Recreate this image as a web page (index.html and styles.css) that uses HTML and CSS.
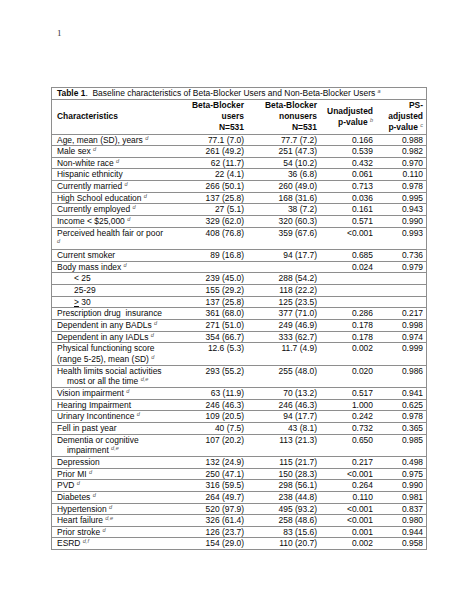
FILE: index.html
```html
<!DOCTYPE html>
<html>
<head>
<meta charset="utf-8">
<link rel="stylesheet" href="styles.css">
</head>
<body>
<div class="page">
  <div class="pagenum">1</div>
  <table class="tbl">
    <colgroup>
      <col class="c1"><col class="c2"><col class="c3"><col class="c4"><col class="c5">
    </colgroup>
    <thead>
      <tr class="title-row">
        <td colspan="5"><b>Table 1</b>.&nbsp; Baseline characteristics of Beta-Blocker Users and Non-Beta-Blocker Users <sup class="n">a</sup></td>
      </tr>
      <tr class="head-row">
        <th class="lbl">Characteristics</th>
        <th class="num">Beta-Blocker<br>users<br>N=531</th>
        <th class="num">Beta-Blocker<br>nonusers<br>N=531</th>
        <th class="num p1">Unadjusted<br>p-value <sup class="n">b</sup></th>
        <th class="num">PS-<br>adjusted<br>p-value <sup class="n">c</sup></th>
      </tr>
    </thead>
    <tbody>
      <tr><td>Age, mean (SD), years <sup class="n">d</sup></td><td class="num">77.1 (7.0)</td><td class="num">77.7 (7.2)</td><td class="num p1">0.166</td><td class="num">0.988</td></tr>
      <tr><td>Male sex <sup class="n">d</sup></td><td class="num">261 (49.2)</td><td class="num">251 (47.3)</td><td class="num p1">0.539</td><td class="num">0.982</td></tr>
      <tr><td>Non-white race <sup class="n">d</sup></td><td class="num">62 (11.7)</td><td class="num">54 (10.2)</td><td class="num p1">0.432</td><td class="num">0.970</td></tr>
      <tr><td>Hispanic ethnicity</td><td class="num">22 (4.1)</td><td class="num">36 (6.8)</td><td class="num p1">0.061</td><td class="num">0.110</td></tr>
      <tr><td>Currently married <sup class="n">d</sup></td><td class="num">266 (50.1)</td><td class="num">260 (49.0)</td><td class="num p1">0.713</td><td class="num">0.978</td></tr>
      <tr><td>High School education <sup class="n">d</sup></td><td class="num">137 (25.8)</td><td class="num">168 (31.6)</td><td class="num p1">0.036</td><td class="num">0.995</td></tr>
      <tr><td>Currently employed <sup class="n">d</sup></td><td class="num">27 (5.1)</td><td class="num">38 (7.2)</td><td class="num p1">0.161</td><td class="num">0.943</td></tr>
      <tr><td>Income &lt; $25,000 <sup class="n">d</sup></td><td class="num">329 (62.0)</td><td class="num">320 (60.3)</td><td class="num p1">0.571</td><td class="num">0.990</td></tr>
      <tr><td>Perceived health fair or poor<br><sup class="n">d</sup></td><td class="num">408 (76.8)</td><td class="num">359 (67.6)</td><td class="num p1">&lt;0.001</td><td class="num">0.993</td></tr>
      <tr><td>Current smoker</td><td class="num">89 (16.8)</td><td class="num">94 (17.7)</td><td class="num p1">0.685</td><td class="num">0.736</td></tr>
      <tr><td>Body mass index <sup class="n">d</sup></td><td class="num"></td><td class="num"></td><td class="num p1">0.024</td><td class="num">0.979</td></tr>
      <tr><td class="ind">&lt; 25</td><td class="num">239 (45.0)</td><td class="num">288 (54.2)</td><td class="num p1"></td><td class="num"></td></tr>
      <tr><td class="ind">25-29</td><td class="num">155 (29.2)</td><td class="num">118 (22.2)</td><td class="num p1"></td><td class="num"></td></tr>
      <tr><td class="ind"><u>&gt;</u> 30</td><td class="num">137 (25.8)</td><td class="num">125 (23.5)</td><td class="num p1"></td><td class="num"></td></tr>
      <tr><td>Prescription drug&nbsp; insurance</td><td class="num">361 (68.0)</td><td class="num">377 (71.0)</td><td class="num p1">0.286</td><td class="num">0.217</td></tr>
      <tr><td>Dependent in any BADLs <sup class="n">d</sup></td><td class="num">271 (51.0)</td><td class="num">249 (46.9)</td><td class="num p1">0.178</td><td class="num">0.998</td></tr>
      <tr><td>Dependent in any IADLs <sup class="n">d</sup></td><td class="num">354 (66.7)</td><td class="num">333 (62.7)</td><td class="num p1">0.178</td><td class="num">0.974</td></tr>
      <tr><td>Physical functioning score<br>(range 5-25), mean (SD) <sup class="n">d</sup></td><td class="num">12.6 (5.3)</td><td class="num">11.7 (4.9)</td><td class="num p1">0.002</td><td class="num">0.999</td></tr>
      <tr><td>Health limits social activities<br><span class="hang">most or all the time <sup class="n">d,e</sup></span></td><td class="num">293 (55.2)</td><td class="num">255 (48.0)</td><td class="num p1">0.020</td><td class="num">0.986</td></tr>
      <tr><td>Vision impairment <sup class="n">d</sup></td><td class="num">63 (11.9)</td><td class="num">70 (13.2)</td><td class="num p1">0.517</td><td class="num">0.941</td></tr>
      <tr><td>Hearing Impairment</td><td class="num">246 (46.3)</td><td class="num">246 (46.3)</td><td class="num p1">1.000</td><td class="num">0.625</td></tr>
      <tr><td>Urinary Incontinence <sup class="n">d</sup></td><td class="num">109 (20.5)</td><td class="num">94 (17.7)</td><td class="num p1">0.242</td><td class="num">0.978</td></tr>
      <tr><td>Fell in past year</td><td class="num">40 (7.5)</td><td class="num">43 (8.1)</td><td class="num p1">0.732</td><td class="num">0.365</td></tr>
      <tr><td>Dementia or cognitive<br><span class="hang">impairment <sup class="n">d,e</sup></span></td><td class="num">107 (20.2)</td><td class="num">113 (21.3)</td><td class="num p1">0.650</td><td class="num">0.985</td></tr>
      <tr><td>Depression</td><td class="num">132 (24.9)</td><td class="num">115 (21.7)</td><td class="num p1">0.217</td><td class="num">0.498</td></tr>
      <tr><td>Prior MI <sup class="n">d</sup></td><td class="num">250 (47.1)</td><td class="num">150 (28.3)</td><td class="num p1">&lt;0.001</td><td class="num">0.975</td></tr>
      <tr><td>PVD <sup class="n">d</sup></td><td class="num">316 (59.5)</td><td class="num">298 (56.1)</td><td class="num p1">0.264</td><td class="num">0.990</td></tr>
      <tr><td>Diabetes <sup class="n">d</sup></td><td class="num">264 (49.7)</td><td class="num">238 (44.8)</td><td class="num p1">0.110</td><td class="num">0.981</td></tr>
      <tr><td>Hypertension <sup class="n">d</sup></td><td class="num">520 (97.9)</td><td class="num">495 (93.2)</td><td class="num p1">&lt;0.001</td><td class="num">0.837</td></tr>
      <tr><td>Heart failure <sup class="n">d,e</sup></td><td class="num">326 (61.4)</td><td class="num">258 (48.6)</td><td class="num p1">&lt;0.001</td><td class="num">0.980</td></tr>
      <tr><td>Prior stroke <sup class="n">d</sup></td><td class="num">126 (23.7)</td><td class="num">83 (15.6)</td><td class="num p1">0.001</td><td class="num">0.944</td></tr>
      <tr><td>ESRD <sup class="n">d,f</sup></td><td class="num">154 (29.0)</td><td class="num">110 (20.7)</td><td class="num p1">0.002</td><td class="num">0.958</td></tr>
    </tbody>
  </table>
</div>
</body>
</html>
```
FILE: styles.css
```css
html, body {
  margin: 0;
  padding: 0;
  background: #ffffff;
}

.page {
  width: 474px;
  height: 613px;
  padding: 28px 0 0 51px;
  box-sizing: border-box;
  font-family: "Liberation Sans", Arial, sans-serif;
  color: #0a0a0a;
}

.pagenum {
  font-family: "Liberation Serif", "DejaVu Serif", serif;
  font-size: 9px;
  line-height: 10px;
  padding-left: 6px;
  color: #333;
}

.tbl {
  margin-top: 49px;
  width: 374px;
  table-layout: fixed;
  border-collapse: separate;
  border-spacing: 0;
  border: 1px solid #8e8e8e;
  font-size: 8.45px;
  line-height: 10.65px;
}

.c1 { width: 122px; }
.c2 { width: 73px; }
.c3 { width: 73px; }
.c4 { width: 58px; }
.c5 { width: 48px; }

.tbl td,
.tbl th {
  padding: 0 3px 0 5px;
  border-top: 1px solid #8e8e8e;
  vertical-align: top;
  white-space: nowrap;
  text-align: left;
  font-weight: normal;
}

.title-row td {
  border-top: 0;
  padding-left: 5px;
  line-height: 10.5px;
}

.head-row th {
  font-weight: bold;
  padding-top: 0.5px;
  padding-bottom: 0.5px;
  line-height: 11px;
  vertical-align: middle;
}

.tbl .num {
  text-align: right;
}

.tbl .p1 {
  padding-right: 5px;
}

.tbl .ind {
  padding-left: 22px;
}

.hang {
  padding-left: 10px;
}

.n {
  font-size: 5.5px;
  line-height: 0;
  font-style: italic;
  font-weight: normal;
  vertical-align: baseline;
  position: relative;
  top: -3px;
  color: #555;
}
```
